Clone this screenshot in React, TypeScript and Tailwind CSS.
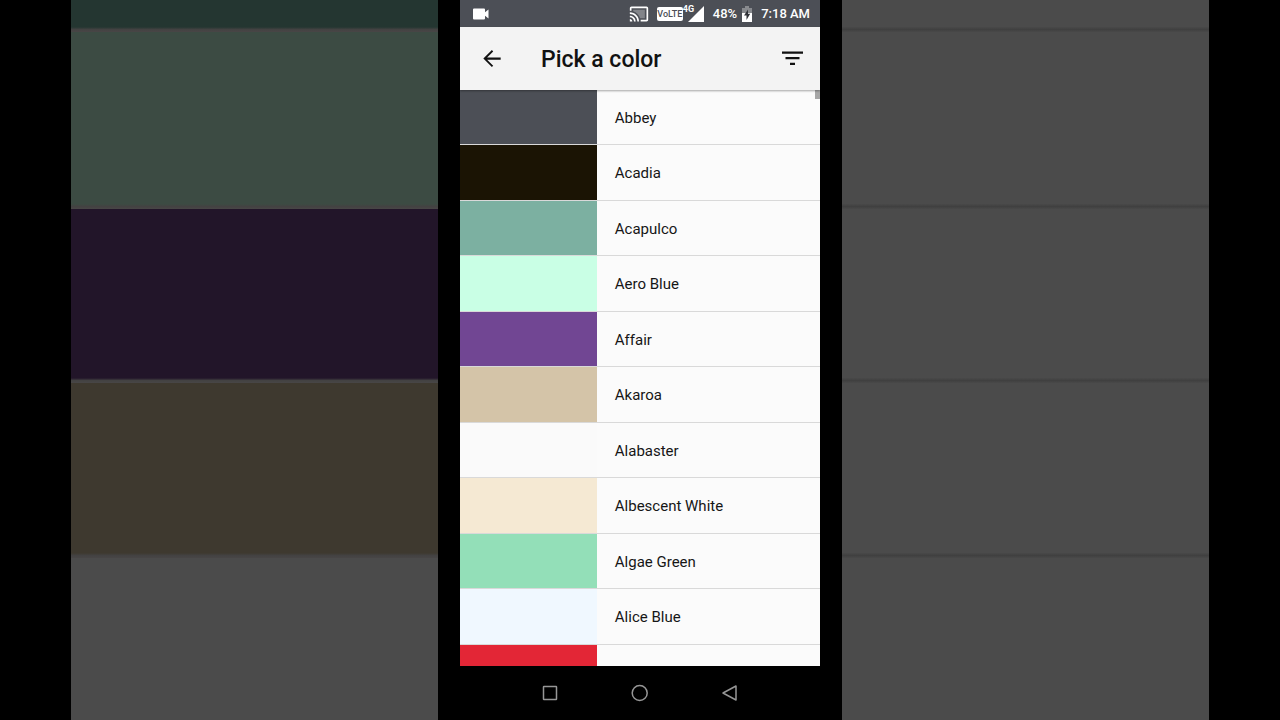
type NamedColor = { name: string; swatch: string };

const COLORS: NamedColor[] = [
  { name: "Abbey", swatch: "bg-[#4c4f56]" },
  { name: "Acadia", swatch: "bg-[#1b1404]" },
  { name: "Acapulco", swatch: "bg-[#7cb0a1]" },
  { name: "Aero Blue", swatch: "bg-[#c9ffe5]" },
  { name: "Affair", swatch: "bg-[#714693]" },
  { name: "Akaroa", swatch: "bg-[#d4c4a8]" },
  { name: "Alabaster", swatch: "bg-[#fafafa]" },
  { name: "Albescent White", swatch: "bg-[#f5e9d3]" },
  { name: "Algae Green", swatch: "bg-[#93dfb8]" },
  { name: "Alice Blue", swatch: "bg-[#f0f8ff]" },
  { name: "", swatch: "bg-[#e32636]" },
];

const BACKDROP_ROWS = [
  { height: "h-[32px]", left: "bg-[#243631]" },
  { height: "h-[177px]", left: "bg-[#3c4b43]" },
  { height: "h-[174px]", left: "bg-[#221529]" },
  { height: "h-[175px]", left: "bg-[#3e392f]" },
  { height: "h-[175px]", left: "bg-[#4b4b4b]" },
];

function Backdrop({ side }: { side: "left" | "right" }) {
  return (
    <div aria-hidden="true" className="flex-1 overflow-hidden bg-[#4b4b4b]">
      {BACKDROP_ROWS.map((row, i) => (
        <div
          key={i}
          className={`flex flex-col ${row.height} ${side === "left" ? row.left : "bg-[#4b4b4b]"}`}
        >
          <div
            className={
              side === "left"
                ? "mt-auto h-[5px] bg-linear-to-b from-transparent via-[#434242] to-[#484646]"
                : "mt-auto h-[5px] bg-linear-to-b from-[#494949] via-[#404040] to-[#494949]"
            }
          />
        </div>
      ))}
    </div>
  );
}

function StatusBar() {
  return (
    <div className="flex h-[27px] shrink-0 items-center bg-[#4c4f56] pt-px pr-[10px] pl-[11px] text-white">
      <svg className="h-[18px] w-5" viewBox="0 0 20 18" fill="currentColor">
        <path d="M2 4.500Q2 3.500 3 3.500h10q1 0 1 1V7.200L17.500 4.500v9L14 10.800v2.700q0 1-1 1H3q-1 0-1-1z" />
      </svg>
      <svg className="ml-auto h-5 w-5" viewBox="0 0 24 24" fill="currentColor">
        <path d="M21 3H3c-1.100 0-2 .9-2 2v3h2V5h18v14h-7v2h7c1.100 0 2-.9 2-2V5c0-1.100-.9-2-2-2z" />
        <path d="M5 7v1.600c3.960 1.280 7.110 4.430 8.390 8.400H19V7z" opacity="0.300" />
        <path d="M1 18v3h3c0-1.660-1.340-3-3-3zm0-4v2c2.760 0 5 2.240 5 5h2c0-3.870-3.130-7-7-7zm0-4v2c4.970 0 9 4.030 9 9h2c0-6.080-4.930-11-11-11z" />
      </svg>
      <span className="ml-2 flex h-[14px] w-[26px] items-center justify-center rounded-[2px] bg-white text-[9px] leading-[14px] font-medium text-[#4c4f56]">
        VoLTE
      </span>
      <div className="relative ml-[5px] h-4 w-4">
        <svg className="h-4 w-4" viewBox="0 0 16 16" fill="currentColor">
          <path d="M16 0v16H0z" />
        </svg>
        <span className="absolute -top-[3px] -left-[5px] text-[9px] leading-[12px] font-bold">4G</span>
      </div>
      <span className="ml-[9px] text-[13px] font-medium">48%</span>
      <svg className="ml-[5px] h-4 w-[10px]" viewBox="0 0 10 16">
        <path d="M3 0h4v2h3v5H0V2h3z" fill="#888a8e" />
        <path d="M0 7h10v9H0z" fill="#fff" />
        <path d="M6 3.500 2 9.500h2.500v4.500L8.200 7.700H6z" fill="#303238" />
      </svg>
      <span className="ml-[9px] text-[13px] font-medium">7:18 AM</span>
    </div>
  );
}

function AppBar() {
  return (
    <header className="z-10 flex h-[63px] shrink-0 items-center bg-[#f3f3f3] px-4 text-[#111] shadow-[0_1px_2px_rgba(0,0,0,0.35)]">
      <button aria-label="Back" className="flex h-8 w-8 items-center justify-center">
        <svg className="h-[26px] w-[26px]" viewBox="0 0 24 24" fill="currentColor">
          <path d="M20 10.600H7.500l5.600-5.600L11.900 3.700 4 11.500l7.900 7.900 1.200-1.200-5.600-5.600H20z" />
        </svg>
      </button>
      <h1 className="ml-[33px] pt-[3px] text-[23px] font-medium">Pick a color</h1>
      <button aria-label="Sort" className="ml-auto -mr-1 flex h-8 w-8 items-center justify-center">
        <svg className="h-7 w-7" viewBox="0 0 28 28" fill="currentColor">
          <path d="M4 6.500h21v2.300H4zM7.500 12h14v2.300h-14zM12 17.800h5v2.300h-5z" />
        </svg>
      </button>
    </header>
  );
}

function ColorRow({ color }: { color: NamedColor }) {
  return (
    <li className="flex h-[55px] border-b border-[#d9d9d9] even:h-14">
      <div className={`w-[38%] ${color.swatch}`} />
      <span className="flex flex-1 items-center pt-0.5 pl-[18px] text-[15px] text-[#161616]">
        {color.name}
      </span>
    </li>
  );
}

function NavBar() {
  return (
    <nav className="flex h-[54px] shrink-0 items-center justify-center gap-[58px] text-[#969696]">
      <button aria-label="Recent apps" className="h-8 w-8">
        <svg viewBox="0 0 32 32" fill="none" stroke="currentColor" strokeWidth="1.500">
          <rect x="9.500" y="9.500" width="13" height="13" rx="0.500" />
        </svg>
      </button>
      <button aria-label="Home" className="h-8 w-8">
        <svg viewBox="0 0 32 32" fill="none" stroke="currentColor" strokeWidth="1.500">
          <circle cx="15.700" cy="16" r="7.500" />
        </svg>
      </button>
      <button aria-label="Back" className="h-8 w-8">
        <svg viewBox="0 0 32 32" fill="none" stroke="currentColor" strokeWidth="1.500" strokeLinejoin="round">
          <path d="M22 9v14L9 16z" />
        </svg>
      </button>
    </nav>
  );
}

export default function App() {
  return (
    <div className="flex h-screen justify-center gap-[22px] bg-black px-[71px] font-[Roboto,sans-serif]">
      <Backdrop side="left" />
      <main className="flex w-[360px] shrink-0 flex-col">
        <StatusBar />
        <AppBar />
        <div className="relative flex-1 overflow-hidden bg-[#fbfbfb]">
          <ul>
            {COLORS.map((color) => (
              <ColorRow key={color.swatch} color={color} />
            ))}
          </ul>
          <div className="absolute top-0 right-0 h-[9px] w-[5px] bg-[#a6a6a6]" />
        </div>
        <NavBar />
      </main>
      <Backdrop side="right" />
    </div>
  );
}
